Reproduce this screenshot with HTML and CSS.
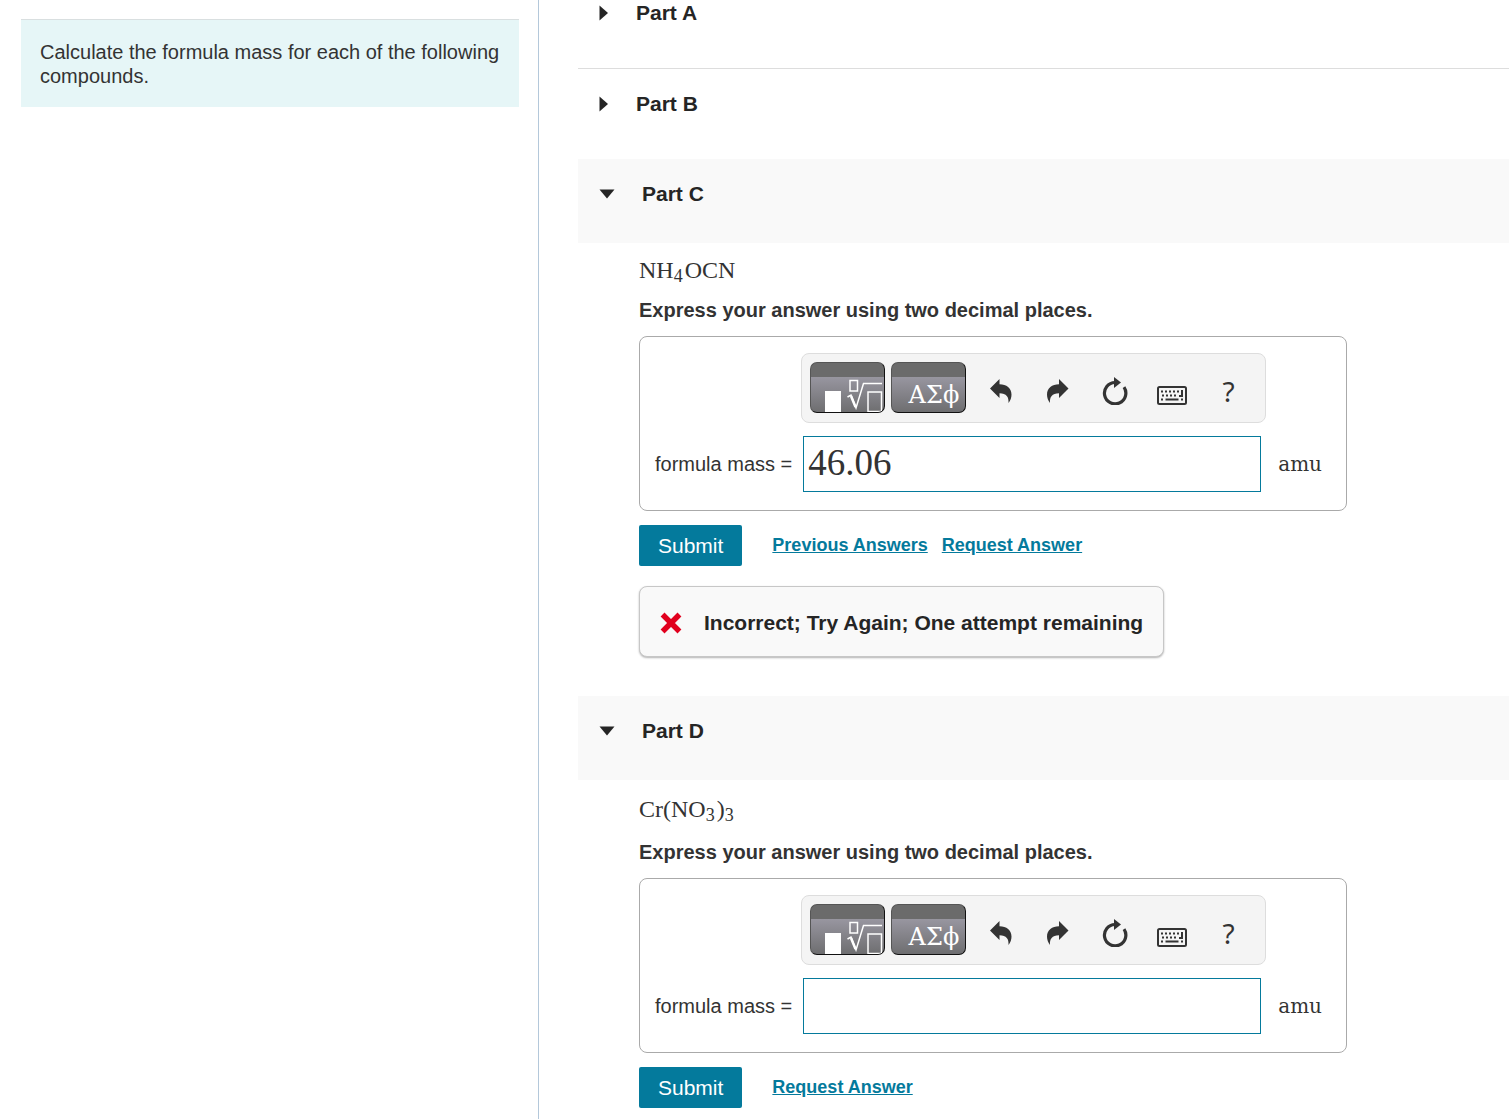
FILE: index.html
```html
<!DOCTYPE html>
<html lang="en">
<head>
    <meta charset="UTF-8">
    <meta name="viewport" content="width=device-width, initial-scale=1.0">
    <title>Formula mass</title>
    <link rel="stylesheet" href="styles.css">
</head>
<body>
    <!-- shared icons -->
    <svg class="sprite" aria-hidden="true">
        <symbol id="icon-right" viewBox="0 0 10 16"><path d="M0.5 0.5 9 8 0.5 15.5z"/></symbol>
        <symbol id="icon-down" viewBox="0 0 16 10"><path d="M0.5 0.5h15L8 9.5z"/></symbol>
        <symbol id="icon-template" viewBox="1 1 73 49">
            <path d="M15 29h16v22H15z" fill="#fff"/>
            <path d="M40 18.500h7.500v10.500H40zM58 30h13.500v19.500H58z" fill="none" stroke="#fff" stroke-width="1.500"/>
            <path d="M37.500 35l3.500-2 5 13 7.500-24.500H72" fill="none" stroke="#fff" stroke-width="1.500"/>
            <path d="M41 34l4.500 11" fill="none" stroke="#fff" stroke-width="2.500"/>
        </symbol>
        <symbol id="icon-undo" viewBox="0 0 22 24"><path d="M0 9.500 9.500 0v5.200C16.500 5.200 21.500 9 21.500 15.500c0 3-1 6-3 8.500.5-6-2-9.800-9-9.800v4.900z"/></symbol>
        <symbol id="icon-redo" viewBox="0 0 22 24"><path d="M21.500 9.500 12 0v5.200C5 5.200 0 9 0 15.500c0 3 1 6 3 8.500-.5-6 2-9.800 9-9.800v4.900z"/></symbol>
        <symbol id="icon-reset" viewBox="0 0 26 28">
            <path d="M13 5.500a10.700 10.700 0 1 0 9 4.700" fill="none" stroke="#333" stroke-width="3.200"/>
            <path d="M12 0l7 5.500-7 5.500z"/>
        </symbol>
        <symbol id="icon-keyboard" viewBox="0 0 30 19">
            <rect x="1" y="1" width="28" height="17" rx="1.500" fill="none" stroke="#333" stroke-width="2"/>
            <path d="M4 5.500h21M5 9.500h16" fill="none" stroke="#333" stroke-width="2" stroke-dasharray="2 2"/>
            <path d="M4 13.500h2M8.500 13.500h13M24 13.500h2M25 4v6h-3" fill="none" stroke="#333" stroke-width="2"/>
        </symbol>
        <symbol id="icon-cross" viewBox="0 0 22 22"><path d="M4.500 4.500l13 13M17.500 4.500l-13 13" fill="none" stroke="#e1001e" stroke-width="5.500" stroke-linecap="square" stroke-linejoin="round"/></symbol>
    </svg>

    <div class="page">
        <aside class="sidebar">
            <p class="intro">Calculate the formula mass for each of the following compounds.</p>
        </aside>

        <main class="parts">
            <h2 class="part-title first">
                <button type="button" aria-expanded="false"><svg class="arrow-right"><use href="#icon-right"/></svg>Part A</button>
            </h2>
            <h2 class="part-title">
                <button type="button" aria-expanded="false"><svg class="arrow-right"><use href="#icon-right"/></svg>Part B</button>
            </h2>

            <h2 class="part-title open">
                <button type="button" aria-expanded="true"><svg class="arrow-down"><use href="#icon-down"/></svg>Part C</button>
            </h2>
            <section class="part-body">
                <p class="formula">NH<sub>4</sub>OCN</p>
                <p class="instruction">Express your answer using two decimal places.</p>
                <div class="answer-box">
                    <div class="toolbar">
                        <button type="button" class="palette" aria-label="Templates"><svg class="template"><use href="#icon-template"/></svg></button>
                        <button type="button" class="palette symbols" aria-label="Symbols">ΑΣϕ</button>
                        <button type="button" class="tool" aria-label="Undo"><svg width="22" height="24"><use href="#icon-undo"/></svg></button>
                        <button type="button" class="tool" aria-label="Redo"><svg width="22" height="24"><use href="#icon-redo"/></svg></button>
                        <button type="button" class="tool" aria-label="Reset"><svg width="26" height="28"><use href="#icon-reset"/></svg></button>
                        <button type="button" class="tool keyboard" aria-label="Keyboard shortcuts"><svg width="30" height="19"><use href="#icon-keyboard"/></svg></button>
                        <button type="button" class="tool help" aria-label="Help">?</button>
                    </div>
                    <label for="massC">formula mass =</label>
                    <input type="text" id="massC" value="46.06">
                    <span class="unit">amu</span>
                </div>
                <div class="actions">
                    <button type="button" class="submit">Submit</button>
                    <a href="#">Previous Answers</a>
                    <a href="#">Request Answer</a>
                </div>
                <div class="feedback">
                    <svg width="22" height="22"><use href="#icon-cross"/></svg>
                    <span>Incorrect; Try Again; One attempt remaining</span>
                </div>
            </section>

            <h2 class="part-title open">
                <button type="button" aria-expanded="true"><svg class="arrow-down"><use href="#icon-down"/></svg>Part D</button>
            </h2>
            <section class="part-body">
                <p class="formula tall">Cr(NO<sub>3</sub>)<sub>3</sub></p>
                <p class="instruction">Express your answer using two decimal places.</p>
                <div class="answer-box">
                    <div class="toolbar">
                        <button type="button" class="palette" aria-label="Templates"><svg class="template"><use href="#icon-template"/></svg></button>
                        <button type="button" class="palette symbols" aria-label="Symbols">ΑΣϕ</button>
                        <button type="button" class="tool" aria-label="Undo"><svg width="22" height="24"><use href="#icon-undo"/></svg></button>
                        <button type="button" class="tool" aria-label="Redo"><svg width="22" height="24"><use href="#icon-redo"/></svg></button>
                        <button type="button" class="tool" aria-label="Reset"><svg width="26" height="28"><use href="#icon-reset"/></svg></button>
                        <button type="button" class="tool keyboard" aria-label="Keyboard shortcuts"><svg width="30" height="19"><use href="#icon-keyboard"/></svg></button>
                        <button type="button" class="tool help" aria-label="Help">?</button>
                    </div>
                    <label for="massD">formula mass =</label>
                    <input type="text" id="massD">
                    <span class="unit">amu</span>
                </div>
                <div class="actions">
                    <button type="button" class="submit">Submit</button>
                    <a href="#">Request Answer</a>
                </div>
            </section>
        </main>
    </div>
</body>
</html>
```
FILE: styles.css
```css
* {
    box-sizing: border-box;
}
body {
    margin: 0;
    font-family: "Liberation Sans", Arial, sans-serif;
    font-size: 20px;
    line-height: 24px;
    color: #333;
    background-color: #fff;
}
p, h2 {
    margin: 0;
}
button {
    font-family: inherit;
    cursor: pointer;
}
svg {
    fill: #333;
    flex-shrink: 0;
}
.sprite {
    position: absolute;
    width: 0;
    height: 0;
}
.page {
    display: flex;
    min-height: 100vh;
}
.sidebar {
    flex: 0 0 539px;
    padding: 19px 19px 0 21px;
    border-right: 1px solid #b4c8da;
}
.intro {
    padding: 20px 19px 19px;
    background-color: #e6f6f7;
    border-top: 1px solid #d9dfe0;
}
.parts {
    flex: 1;
    min-width: 0;
    padding-left: 39px;
}

/* part headings */
.part-title {
    padding: 23px 21px 43px;
    line-height: 24px;
}
.part-title.first {
    padding-top: 1px;
    border-bottom: 1px solid #ddd;
}
.part-title.open {
    padding-bottom: 37px;
    background-color: #f9f9f9;
}
.part-title button {
    display: flex;
    align-items: center;
    padding: 0;
    border: none;
    background: none;
    color: #252525;
    font-size: 21px;
    font-weight: bold;
    line-height: 24px;
}
.part-title svg {
    fill: #252525;
}
.arrow-right {
    width: 10px;
    height: 16px;
    margin-right: 27px;
}
.arrow-down {
    width: 16px;
    height: 10px;
    margin-right: 27px;
}

/* part content */
.part-body {
    padding: 13px 24px 11px 61px;
}
.formula {
    font-family: "Liberation Serif", "Times New Roman", serif;
    font-size: 24px;
    line-height: 28px;
}
.formula.tall {
    line-height: 33px;
}
.formula sub {
    margin-right: 2px;
    font-size: 18px;
    line-height: 0;
    vertical-align: -4px;
}
.instruction {
    margin: 14px 0;
    font-weight: bold;
}
.answer-box {
    display: grid;
    grid-template-columns: auto 1fr auto;
    align-items: center;
    gap: 13px 9px;
    max-width: 708px;
    padding: 16px 24px 18px 15px;
    border: 1px solid #aaa;
    border-radius: 8px;
}
.toolbar {
    grid-column: 2;
    display: flex;
    align-items: center;
    height: 70px;
    padding: 0 8px 2px;
    border: 1px solid #ddd;
    border-radius: 8px;
    background-color: #f4f4f4;
}
.answer-box label {
    grid-column: 1;
}
.palette {
    display: flex;
    width: 75px;
    height: 51px;
    margin-right: 6px;
    padding: 0;
    border: 1px solid #111;
    border-top-color: #555;
    border-left-color: #555;
    border-radius: 7px;
    background: linear-gradient(#6b6b6b 0, #6b6b6b 14px, #9896a0 14px, #6e6e70 100%);
    overflow: hidden;
}
.template {
    width: 73px;
    height: 49px;
}
.symbols {
    align-items: flex-end;
    justify-content: flex-end;
    padding: 0 6px 2px 0;
    color: #fff;
    font-family: "DejaVu Serif", serif;
    font-size: 24px;
    line-height: 30px;
}
.tool {
    display: flex;
    flex: 1;
    justify-content: center;
    padding: 8px 0 0;
    border: none;
    background: none;
    color: #333;
}
.keyboard {
    padding-top: 16px;
}
.help {
    font-family: "Noto Sans", sans-serif;
    font-size: 28px;
    line-height: 28px;
}
.answer-box input {
    min-width: 0;
    height: 56px;
    margin: 0 5px 0 2px;
    padding: 0 4px 3px;
    border: 1px solid #047a9c;
    color: #333;
    font-family: "Liberation Serif", "Times New Roman", serif;
    font-size: 37px;
}
.unit {
    padding-left: 3px;
    font-family: "DejaVu Serif", serif;
}
.actions {
    display: flex;
    align-items: center;
    margin-top: 14px;
}
.submit {
    height: 41px;
    margin-right: 30px;
    padding: 0 19px;
    border: none;
    border-radius: 2px;
    background-color: #047a9c;
    color: #fff;
    font-size: 21px;
}
.actions a {
    margin-right: 14px;
    padding-bottom: 2px;
    color: #047a9c;
    font-size: 18px;
    font-weight: bold;
}
.feedback {
    display: inline-flex;
    align-items: center;
    gap: 22px;
    margin: 20px 0 28px;
    padding: 24px 20px 21px;
    border: 1px solid #c7c7c7;
    border-radius: 8px;
    background-color: #f9f9f9;
    box-shadow: 0 1px 2px rgba(0, 0, 0, 0.3);
    color: #252525;
    font-size: 21px;
    font-weight: bold;
}
```
